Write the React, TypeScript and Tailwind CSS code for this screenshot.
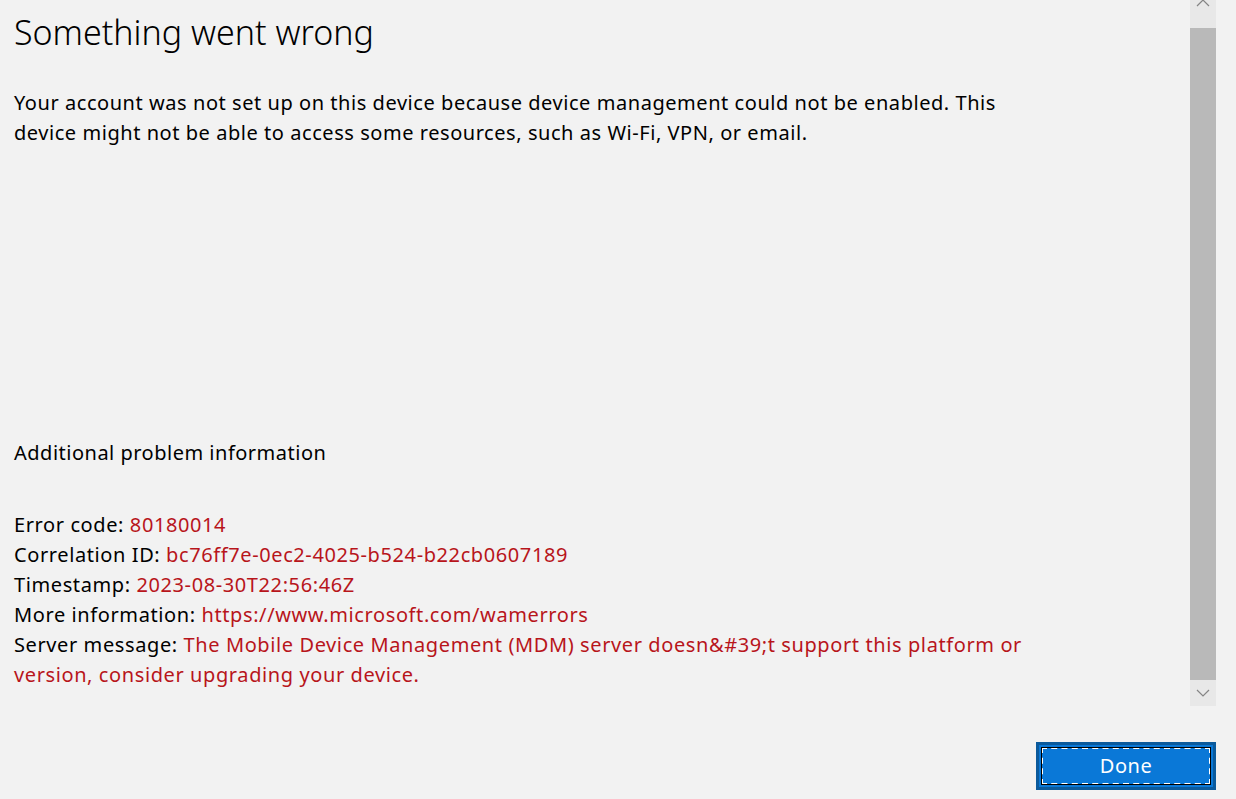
import React from "react";

export default function App() {
  const red = "text-[#b8151b]";
  return (
    <div className="w-[1236px] h-[799px] bg-[#f2f2f2] relative overflow-hidden text-[#000]" style={{ fontFamily: '"Segoe UI", "Noto Sans", sans-serif' }}>
      <div className="flex h-full">
        <div className="flex-1 pl-[14px] pt-[10px]">
          <h1 className="text-[34px] leading-[44px] font-light text-[#000]">Something went wrong</h1>
          <p className="mt-[34px] text-[20px] leading-[30px] w-[1010px] tracking-[0.55px]">
            Your account was not set up on this device because device management could not be enabled. This device might not be able to access some resources, such as Wi-Fi, VPN, or email.
          </p>
          <p className="mt-[290px] text-[20px] leading-[30px] tracking-[0.5px]">Additional problem information</p>
          <div className="mt-[42px] text-[20px] leading-[30px] w-[1030px] tracking-[0.6px]">
            <div>Error code: <span className={red}>80180014</span></div>
            <div>Correlation ID: <span className={red}>bc76ff7e-0ec2-4025-b524-b22cb0607189</span></div>
            <div>Timestamp: <span className={red}>2023-08-30T22:56:46Z</span></div>
            <div>More information: <span className={red}>https://www.microsoft.com/wamerrors</span></div>
            <div>Server message: <span className={red}>The Mobile Device Management (MDM) server doesn&amp;#39;t support this platform or version, consider upgrading your device.</span></div>
          </div>
        </div>
        <div className="w-[46px] flex flex-col">
          <div className="w-[26px] h-[706px] bg-[#e8e8e8] flex flex-col">
            <div className="h-[28px] flex items-center justify-center">
              <svg width="14" height="8" viewBox="0 0 14 8" className="-mt-[22px]"><path d="M1 7 L7 1 L13 7" fill="none" stroke="#858585" strokeWidth="1.2" /></svg>
            </div>
            <div className="flex-1 bg-[#b9b9b9]" />
            <div className="h-[26px] flex items-center justify-center">
              <svg width="14" height="8" viewBox="0 0 14 8"><path d="M1 1 L7 7 L13 1" fill="none" stroke="#858585" strokeWidth="1.2" /></svg>
            </div>
          </div>
        </div>
      </div>
      <button className="absolute left-[1036px] top-[742px] w-[180px] h-[48px] bg-[#0a78d7] border-[3px] border-[#0b5a9c] text-white text-[20px] flex items-center justify-center tracking-[0.5px]">
        <span className="absolute inset-[2px] border-[2px] border-dashed border-white outline outline-1 outline-black -outline-offset-1" />
        <span className="relative">Done</span>
      </button>
    </div>
  );
}
